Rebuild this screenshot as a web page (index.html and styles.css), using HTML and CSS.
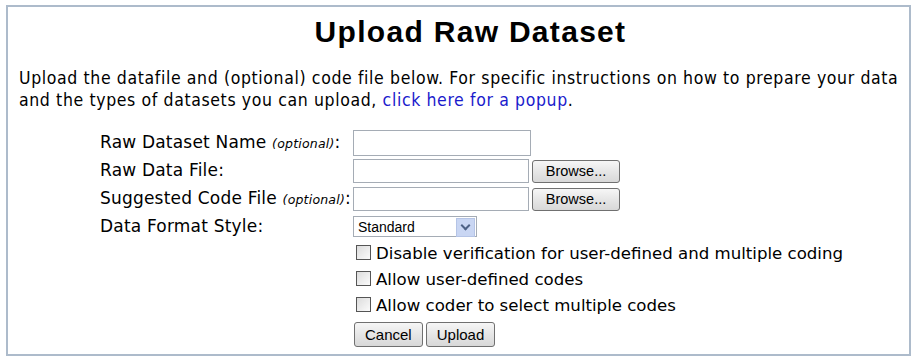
FILE: index.html
```html
<!DOCTYPE html>
<html lang="en">
<head>
    <meta charset="UTF-8">
    <title>Upload Raw Dataset</title>
    <link rel="stylesheet" href="styles.css">
</head>
<body>
<div id="upload">
    <h1>Upload Raw Dataset</h1>
    <p class="intro">Upload the datafile and (optional) code file below. For specific instructions on how to prepare your data<br>
        and the types of datasets you can upload, <a href="javascript:;">click here for a popup</a>.</p>
    <form class="f-upload">
        <table>
            <tr>
                <td class="lbl">Raw Dataset Name <i>(optional)</i>:</td>
                <td><input type="text" class="f-text"/></td>
            </tr>
            <tr>
                <td class="lbl">Raw Data File:</td>
                <td><span class="f-file"></span><button type="button" class="btn browse">Browse...</button></td>
            </tr>
            <tr>
                <td class="lbl">Suggested Code File <i>(optional)</i>:</td>
                <td><span class="f-file"></span><button type="button" class="btn browse">Browse...</button></td>
            </tr>
            <tr>
                <td class="lbl">Data Format Style:</td>
                <td><span class="f-select">Standard<b></b></span></td>
            </tr>
            <tr>
                <td></td>
                <td class="chk"><span class="box"></span>Disable verification for user-defined and multiple coding</td>
            </tr>
            <tr>
                <td></td>
                <td class="chk"><span class="box"></span>Allow user-defined codes</td>
            </tr>
            <tr>
                <td></td>
                <td class="chk"><span class="box"></span>Allow coder to select multiple codes</td>
            </tr>
            <tr>
                <td></td>
                <td class="acts"><button type="button" class="btn">Cancel</button><button type="button" class="btn">Upload</button></td>
            </tr>
        </table>
    </form>
</div>
</body>
</html>
```
FILE: styles.css
```css
*{
    margin : 0;
    padding: 0;
}
body{
    background: #fff;
    color: #000;
    font: 16px/1.4 "DejaVu Sans", Verdana, sans-serif;
}
#upload{
    margin: 5px 5px 0 6px;
    height: 347px;
    border: 2px solid #adbbcb;
    padding: 0 10px;
}
#upload h1{
    text-align: center;
    font: 700 30px/1 "Liberation Sans", Arial, sans-serif;
    letter-spacing: 1.3px;
    padding: 10px 0 0 24px;
    height: 50px;
}
#upload .intro{
    font: 17.5px/22px "DejaVu Sans", Verdana, sans-serif;
    font-stretch: condensed;
    letter-spacing: 0.62px;
    white-space: nowrap;
    padding: 0 0 0 1px;
}
#upload .intro a{
    color: #1a1acc;
    text-decoration: none;
}
.f-upload{
    padding: 18px 0 0 82px;
}
.f-upload table{
    border-collapse: collapse;
}
.f-upload td{
    padding: 0;
    vertical-align: middle;
}
.f-upload td.lbl{
    width: 253px;
    height: 28px;
    font-size: 17px;
    letter-spacing: 0.2px;
    white-space: nowrap;
}
.f-upload td.lbl i{
    font-size: 12.5px;
    letter-spacing: 0.2px;
}
.f-text,
.f-file{
    display: inline-block;
    vertical-align: middle;
    width: 174px;
    height: 22px;
    border: 1px solid #a5acb5;
    background: #fff;
    margin: 0 3px 0 0;
}
.f-text{
    width: 176px;
    height: 24px;
}
.btn{
    display: inline-block;
    vertical-align: middle;
    height: 23px;
    padding: 0 8px;
    border: 1px solid #707070;
    border-radius: 3px;
    background: linear-gradient(#f6f6f6, #e6e6e6 50%, #d8d8d8);
    font: 14.5px "Liberation Sans", Arial, sans-serif;
    color: #000;
}
.browse{
    width: 88px;
}
.f-select{
    display: inline-block;
    position: relative;
    height: 21px;
    border: 1px solid #a5acb5;
    font: 14px/21px "Liberation Sans", Arial, sans-serif;
    padding: 0 0 0 4px;
    box-sizing: border-box;
    width: 124px;
}
.f-select b{
    position: absolute;
    top: 1px;
    right: 1px;
    width: 17px;
    height: 17px;
    background: #c9d6f3;
    border: 1px solid #b5c4e6;
}
.f-select b:after{
    content: "";
    position: absolute;
    left: 5px;
    top: 3px;
    width: 5px;
    height: 5px;
    border: solid #4d6185;
    border-width: 0 2px 2px 0;
    transform: rotate(45deg);
}
.f-upload td.chk{
    height: 26px;
    font-size: 16.6px;
    white-space: nowrap;
}
.box{
    display: inline-block;
    vertical-align: -1px;
    width: 13px;
    height: 13px;
    border: 1px solid #555;
    background: linear-gradient(135deg, #dcdcdc, #fbfbfb);
    margin: 0 5px 0 3px;
}
.f-upload td.acts{
    padding: 3px 0 0 1px;
}
.acts .btn{
    height: 25px;
    margin: 0 3px 0 0;
    padding: 0 10px;
    font-size: 15px;
}
```
